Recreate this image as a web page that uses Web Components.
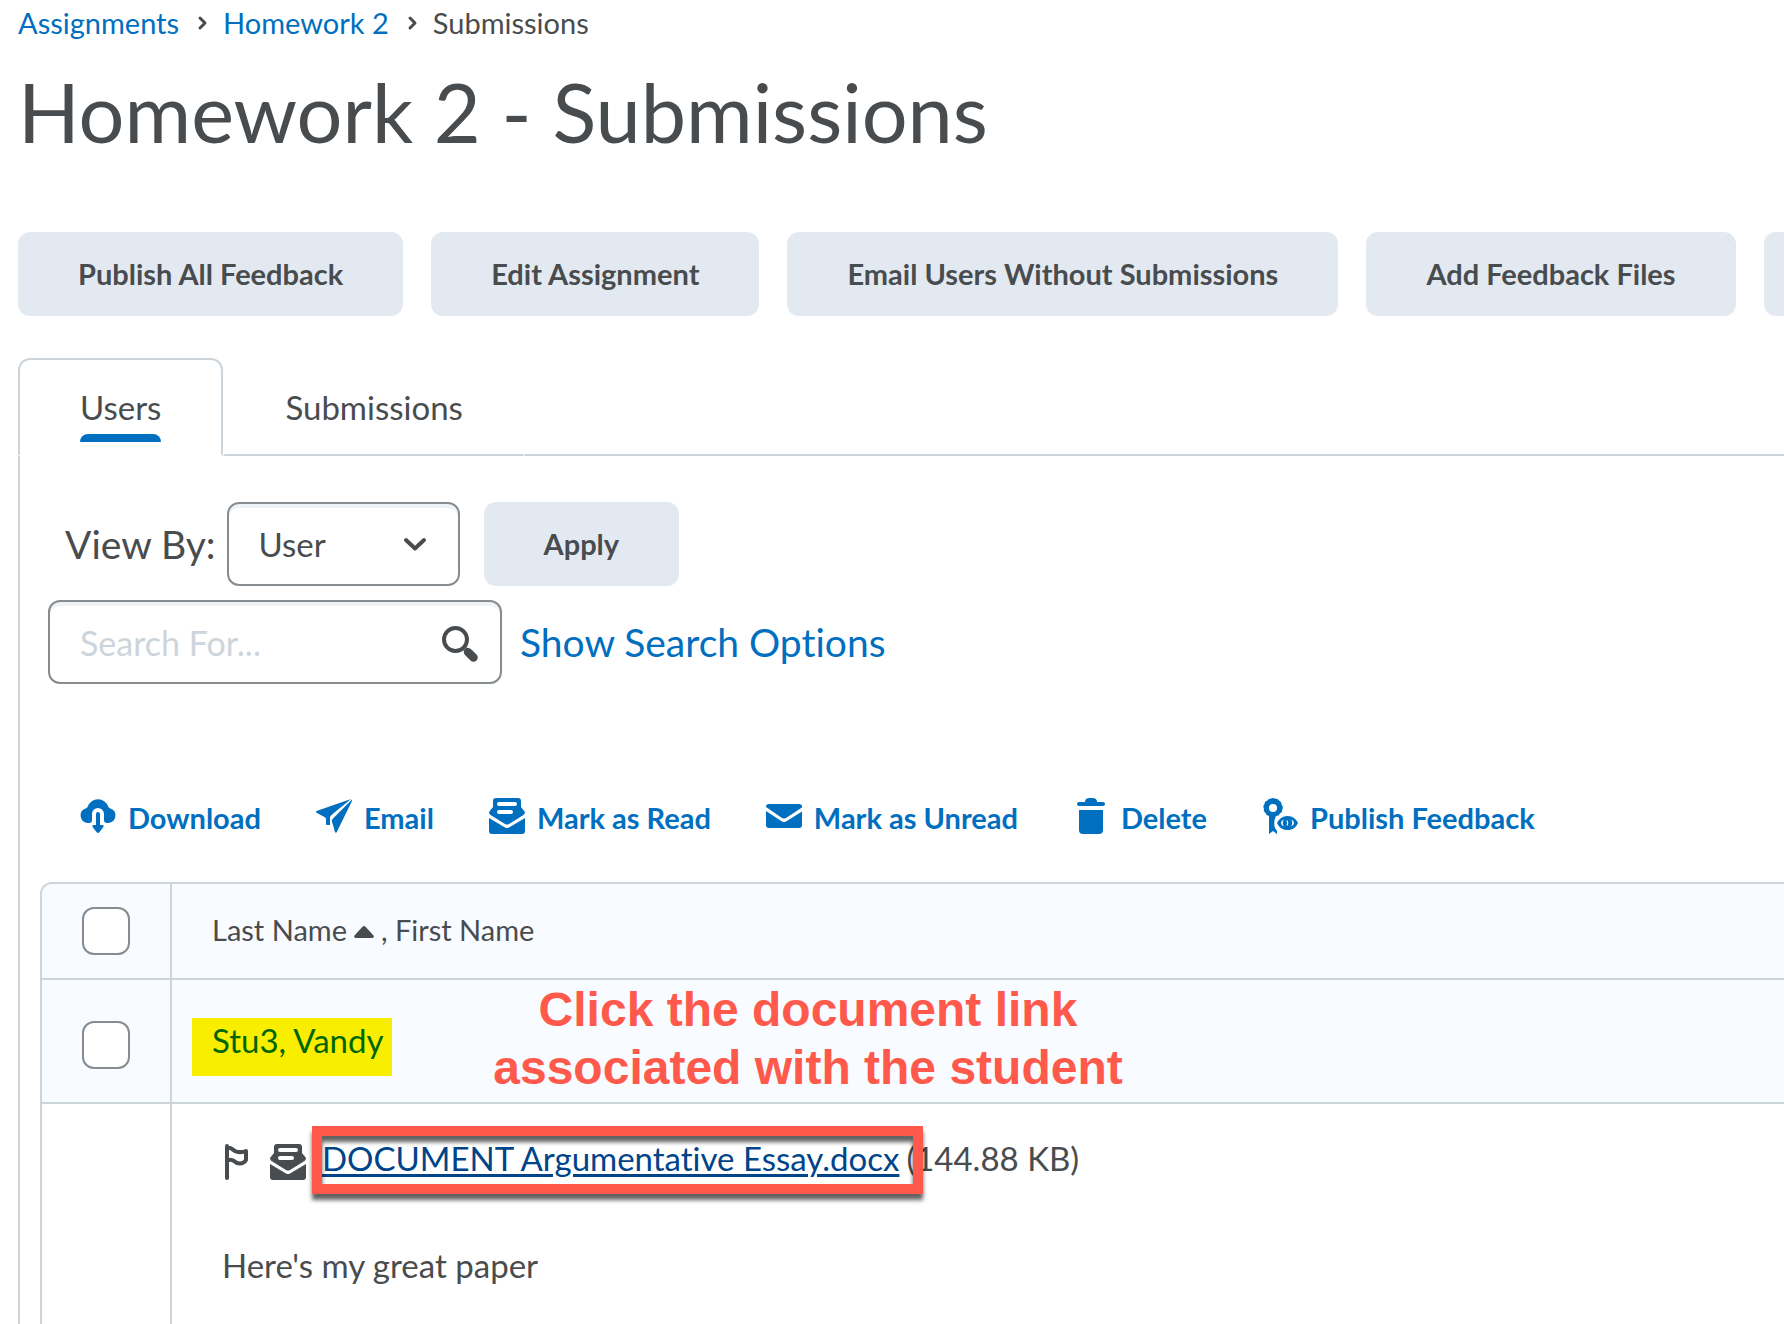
<!DOCTYPE html>
<html lang="en">
<head>
<meta charset="utf-8">
<title>Homework 2 - Submissions</title>
<style>
  html, body { margin: 0; }
  body {
    font-family: Lato, "Liberation Sans", sans-serif;
    font-variant-ligatures: no-common-ligatures;
    color: #494c4e;
    background: #fff;
    --link: #006fbf;
    --line: #cdd5dc;
    --control-line: #868c8f;
    --button: #e3e9f1;
  }
</style>
</head>
<body>
<submissions-page></submissions-page>

<script>
const define = (name, html, setup) => {
  const template = document.createElement('template');
  template.innerHTML = html;
  customElements.define(name, class extends HTMLElement {
    connectedCallback() {
      if (this.shadowRoot) return;
      this.attachShadow({ mode: 'open' }).append(template.content.cloneNode(true));
      if (setup) setup(this, this.shadowRoot);
    }
  });
};

const openEnvelope = `
  <path fill-rule="evenodd" d="M7 0H29Q32 0 32 3V9L36 14Q36 16 34.500 17L20 26Q18 27.200 16 26L1.500 17Q0 16 0 14L4 9V3Q4 0 7 0ZM10 4A2 2 0 0 0 10 8H26A2 2 0 0 0 26 4ZM10 12A2 2 0 0 0 10 16H22A2 2 0 0 0 22 12Z"/>
  <path d="M0 20L16 29.500Q18 30.600 20 29.500L36 20V33Q36 36 33 36H3Q0 36 0 33Z"/>`;

const icons = {
  download: `
    <path d="M9 25H7.500A7.500 7.500 0 0 1 5.500 10.500A3 3 0 0 0 7.500 9A11 11 0 0 1 28.500 9A3 3 0 0 0 30.500 10.500A7.500 7.500 0 0 1 28.500 25H27A3 3 0 0 1 24 22V16A6 6 0 0 0 12 16V22A3 3 0 0 1 9 25Z"/>
    <path d="M16 16A2 2 0 0 1 20 16V27H22.500Q24.500 27.500 23 29.500L19.500 34Q18 36 16.500 34L13 29.500Q11.500 27.500 13.500 27H16Z"/>`,
  email: `
    <path d="M35 1L0.500 13Q-0.500 14 0.500 14.800L8.500 19Q9.500 19.500 10 20.500V26Q10 27 11 27H14V25L14 19Q14.500 17.500 16 16.500Z"/>
    <path d="M36 1.500L16.500 21Q15.500 22 16 24L17 27L18.800 33.500Q20 36 21 33.500L35.500 4Q36.500 2 36 1.500Z"/>`,
  read: openEnvelope,
  unread: `
    <path d="M0 9V8.500Q0 6 3 6H33Q36 6 36 8.500V9.500L20 20Q18 21.200 16 20Z"/>
    <path d="M0 13L16 23.500Q18 24.600 20 23.500L36 13.500V27Q36 30 33 30H3Q0 30 0 27Z"/>`,
  trash: `
    <path d="M6 4H12V3Q13 0 16 0H20Q23 0 24 3V4H30A2 2 0 0 1 30 8H6A2 2 0 0 1 6 4Z"/>
    <path d="M6 12H30V32Q30 36 26 36H10Q6 36 6 32Z"/>`,
  publish: `
    <path fill-rule="evenodd" d="M9 0.500Q11-0.500 13 0.500Q16 0.500 17 2.500Q20 4 19.500 6.500Q21.500 9 20.500 11Q20.500 14 18 15.500Q17 18 14 18Q11 24 13 30L15 33V36L11 33L7 36V18Q4 17.500 3.500 15Q1 13 2 10.500Q0.500 8 2.500 6Q2.500 3 5.500 2.500Q6.500 0.500 9 0.500ZM11 6A4 4 0 1 0 11 14A4 4 0 1 0 11 6Z"/>
    <path d="M25.500 18C30.500 18 34 21 36 25C34 29.500 30.500 32 25.500 32C20.500 32 17 29.500 15 25C17 21 20.500 18 25.500 18Z"/>
    <ellipse cx="25.500" cy="25" rx="6.500" ry="4" fill="#fff"/>
    <circle cx="25.500" cy="25" r="4.800"/>
    <path d="M25 22.500Q26.500 25 25 27.500" fill="none" stroke="#fff" stroke-width="1.200"/>`,
  flag: `
    <path d="M5 2V34M5 4C10 2 11 8 16 8Q20.500 8.500 24 7V16C21 21 15 20 12 17Q8 14.500 5 17" fill="none" stroke="currentColor" stroke-width="4" stroke-linecap="round" stroke-linejoin="round"/>`,
  search: `
    <circle cx="13.500" cy="13.500" r="11.500" fill="none" stroke="currentColor" stroke-width="4"/>
    <path d="M21.500 24.500L24.500 21.500Q28 21.500 30 24L34.500 28.500A4 4 0 0 1 28.500 34.500L24 30Q21.500 28 21.500 24.500Z"/>`,
  chevron: `
    <path d="M9 14L18 22.500L27 14" fill="none" stroke="currentColor" stroke-width="4" stroke-linecap="round" stroke-linejoin="round"/>`
};

define('ui-icon', `
  <style>
    :host { display: block; flex: none; width: 36px; height: 36px; }
    svg { display: block; width: 100%; height: 100%; overflow: visible; fill: currentColor; }
  </style>
  <svg viewBox="0 0 36 36" aria-hidden="true"></svg>`,
  (host, root) => { root.querySelector('svg').innerHTML = icons[host.getAttribute('name')] || ''; });

define('ui-breadcrumbs', `
  <style>
    :host { display: block; font-size: 29px; line-height: 36px; padding: 5px 18px 0; }
    nav { display: flex; }
    ::slotted(a) { color: var(--link); text-decoration: none; }
    svg { flex: none; width: 44px; height: 36px; }
    path { fill: none; stroke: #494c4e; stroke-width: 3; stroke-linecap: round; stroke-linejoin: round; }
  </style>
  <nav aria-label="Breadcrumb">
    <slot name="first"></slot>
    <svg viewBox="0 0 44 36" aria-hidden="true"><path d="M21 13L26 18L21 23"/></svg>
    <slot name="second"></slot>
    <svg viewBox="0 0 44 36" aria-hidden="true"><path d="M21 13L26 18L21 23"/></svg>
    <slot></slot>
  </nav>`);

define('ui-button', `
  <style>
    :host { display: block; flex: none; }
    button {
      display: block; height: 84px; padding: 0 60px; border: 0; border-radius: 12px;
      background: var(--button); color: inherit; font: bold 29px/36px Lato, sans-serif; white-space: nowrap;
      font-variant-ligatures: no-common-ligatures;
    }
  </style>
  <button type="button"><slot></slot></button>`);

define('button-row', `
  <style>:host { display: flex; gap: 28px; padding: 72px 18px 0; }</style>
  <slot></slot>`);

define('ui-tabs', `
  <style>
    :host { display: block; margin: 42px 0 0 18px; }
    [role=tablist] { display: flex; }
    button {
      display: block; margin: 0; padding: 29px 60px 12px; border: 2px solid transparent; border-bottom-color: var(--line);
      background: none; color: inherit; font: 33px/36px Lato, sans-serif;
    }
    button span { display: block; }
    button span::after { content: ""; display: block; height: 8px; margin-top: 9px; }
    button[aria-selected=true] {
      border-color: var(--line); border-bottom-color: transparent; border-radius: 12px 12px 0 0;
    }
    button[aria-selected=true] span::after { background: var(--link); border-radius: 8px 8px 0 0; }
    .rest { flex: 1; border-bottom: 2px solid var(--line); }
    .panel { border-left: 2px solid var(--line); padding-top: 46px; }
  </style>
  <div role="tablist">
    <button type="button" role="tab" aria-selected="true"><span>Users</span></button>
    <button type="button" role="tab" aria-selected="false"><span>Submissions</span></button>
    <div class="rest"></div>
  </div>
  <div class="panel" role="tabpanel"><slot></slot></div>`);

define('view-filter', `
  <style>
    :host { display: flex; align-items: center; padding-left: 45px; }
    label { font-size: 39px; line-height: 44px; margin-right: 11px; }
    .box { display: grid; align-items: center; margin-right: 24px; }
    .box > * { grid-area: 1 / 1; }
    select {
      appearance: none; box-sizing: border-box; width: 233px; height: 84px; padding: 0 60px 0 30px; margin: 0;
      border: 2px solid var(--control-line); border-radius: 12px; background: #fff;
      box-shadow: inset 0 4px 0 #f0f3f5; color: inherit; font: 33px/36px Lato, sans-serif;
    }
    ui-icon { justify-self: end; margin-right: 27px; pointer-events: none; }
  </style>
  <label for="view">View By:</label>
  <div class="box">
    <select id="view"><option>User</option></select>
    <ui-icon name="chevron"></ui-icon>
  </div>
  <ui-button>Apply</ui-button>`);

define('search-bar', `
  <style>
    :host { display: flex; align-items: center; gap: 18px; padding: 14px 0 0 28px; }
    .box { display: grid; align-items: center; }
    .box > * { grid-area: 1 / 1; }
    input {
      box-sizing: border-box; width: 454px; height: 84px; padding: 0 70px 0 30px; margin: 0;
      border: 2px solid var(--control-line); border-radius: 12px; background: #fff;
      box-shadow: inset 0 4px 0 #f0f3f5; color: inherit; font: 34px/36px Lato, sans-serif;
    }
    input::placeholder { color: var(--line); opacity: 1; }
    button { justify-self: end; margin: 4px 24px 0 0; padding: 0; border: 0; background: none; color: inherit; }
    a { color: var(--link); font-size: 39px; line-height: 44px; text-decoration: none; }
  </style>
  <div class="box">
    <input type="text" aria-label="Search For" placeholder="Search For...">
    <button type="button" aria-label="Search"><ui-icon name="search"></ui-icon></button>
  </div>
  <a href="#options">Show Search Options</a>`);

define('action-button', `
  <style>
    :host { display: block; flex: none; }
    button {
      display: flex; align-items: flex-start; gap: 12px; margin: 0; padding: 0; border: 0; background: none;
      color: var(--link); font: bold 29px/40px Lato, sans-serif; white-space: nowrap;
    }
  </style>
  <button type="button"><ui-icon></ui-icon><slot></slot></button>`,
  (host, root) => {
    const icon = document.createElement('ui-icon');
    icon.setAttribute('name', host.getAttribute('icon'));
    root.querySelector('ui-icon').replaceWith(icon);
  });

define('action-bar', `
  <style>:host { display: flex; gap: 55px; padding: 114px 0 44px 60px; }</style>
  <slot></slot>`);

define('ui-callout', `
  <style>
    :host {
      display: block; position: absolute; top: 1px; left: 321px; width: 630px; text-align: center;
      color: #ff594b; font: bold 48px/58px "Liberation Sans", sans-serif; white-space: nowrap;
    }
  </style>
  <slot></slot>`);

define('ui-frame', `
  <style>
    :host { display: block; position: relative; }
    i {
      position: absolute; inset: -14px -24px -18px -10px; border: 10px solid #ff594b;
      filter: drop-shadow(0 6px 2px rgba(0, 0, 0, .62)); pointer-events: none;
    }
  </style>
  <slot></slot><i></i>`);

define('submissions-table', `
  <style>
    :host { display: block; margin-left: 20px; }
    table {
      width: 100%; border: 2px solid var(--line); border-width: 2px 0 0 2px; border-radius: 12px 0 0 0;
      border-spacing: 0; overflow: hidden;
    }
    th, td { padding: 0; text-align: left; font-weight: normal; vertical-align: top; }
    tr > :first-child { width: 128px; border-right: 2px solid var(--line); }
    .tint > * { background: #f8fbff; border-bottom: 2px solid var(--line); }
    .head > * { height: 94px; }
    .user > * { height: 122px; }
    input {
      appearance: none; display: block; box-sizing: border-box; width: 48px; height: 48px; margin: 23px auto 0;
      border: 2px solid var(--control-line); border-radius: 12px; background: #fff;
    }
    .user input { margin-top: 41px; }
    .names { display: flex; align-items: center; padding: 28px 40px 0; font-size: 29px; line-height: 36px; white-space: pre; }
    .names svg { width: 20px; height: 12px; margin: 4px 7px 0; fill: currentColor; }
    .name { position: relative; }
    .name a {
      display: inline-block; margin: 38px 0 0 20px; padding: 0 8px 14px 20px; background: #f9ed00;
      color: #006700; font-size: 33px; line-height: 44px; text-decoration: none;
    }
    .detail { padding: 36px 50px 60px; font-size: 33px; line-height: 36px; }
    .file { display: flex; align-items: flex-start; }
    .file ui-icon { margin: 4px 12px 0 0; }
    .file ui-icon + ui-icon { margin-right: 16px; }
    .file a { color: #004489; text-decoration-thickness: 3px; text-underline-offset: 3px; }
    .file span { margin-left: 7px; }
    p { margin: 67px 0 0; }
  </style>
  <table>
    <tr class="tint head">
      <th><input type="checkbox" aria-label="Select all"></th>
      <th><div class="names">Last Name<svg viewBox="0 0 20 12" aria-hidden="true"><path d="M8.500 0.700Q10-0.500 11.500 0.700L19.500 9.500Q20.500 12 18 12H2Q-0.500 12 0.500 9.500Z"/></svg>, First Name</div></th>
    </tr>
    <tr class="tint user">
      <td><input type="checkbox" aria-label="Select Stu3, Vandy"></td>
      <td class="name"><a href="#user">Stu3, Vandy</a><ui-callout>Click the document link<br>associated with the student</ui-callout></td>
    </tr>
    <tr>
      <td></td>
      <td><div class="detail">
        <div class="file">
          <ui-icon name="flag"></ui-icon><ui-icon name="read"></ui-icon>
          <ui-frame><a href="#doc">DOCUMENT Argumentative Essay.docx</a></ui-frame>
          <span>(144.88 KB)</span>
        </div>
        <p>Here's my great paper</p>
      </div></td>
    </tr>
  </table>`);

define('submissions-page', `
  <style>
    :host { display: block; height: 100vh; overflow: hidden; }
    h1 { margin: 0; padding: 23px 18px 0; font-size: 81px; line-height: 96px; font-weight: normal; }
  </style>
  <ui-breadcrumbs>
    <a slot="first" href="#assignments">Assignments</a>
    <a slot="second" href="#homework">Homework 2</a>
    <span>Submissions</span>
  </ui-breadcrumbs>
  <h1>Homework 2 - Submissions</h1>
  <button-row>
    <ui-button>Publish All Feedback</ui-button>
    <ui-button>Edit Assignment</ui-button>
    <ui-button>Email Users Without Submissions</ui-button>
    <ui-button>Add Feedback Files</ui-button>
    <ui-button aria-label="More actions"></ui-button>
  </button-row>
  <ui-tabs>
    <view-filter></view-filter>
    <search-bar></search-bar>
    <action-bar>
      <action-button icon="download">Download</action-button>
      <action-button icon="email">Email</action-button>
      <action-button icon="read">Mark as Read</action-button>
      <action-button icon="unread">Mark as Unread</action-button>
      <action-button icon="trash">Delete</action-button>
      <action-button icon="publish">Publish Feedback</action-button>
    </action-bar>
    <submissions-table></submissions-table>
  </ui-tabs>`);
</script>
</body>
</html>
